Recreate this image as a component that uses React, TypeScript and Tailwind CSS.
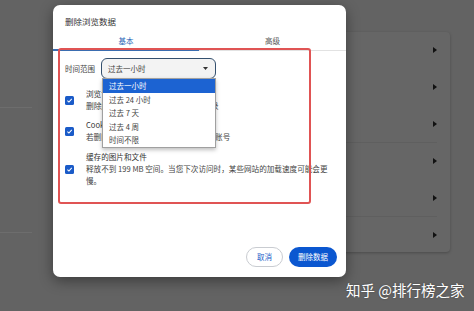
const font = { fontFamily: '"Noto Sans CJK SC", "Noto Sans", sans-serif' };

const options = ["过去一小时", "过去 24 小时", "过去 7 天", "过去 4 周", "时间不限"];

function Check() {
  return (
    <div className="w-[9px] h-[9px] rounded-[1.5px] bg-[#1a5bc8] flex items-center justify-center shrink-0">
      <svg width="7" height="7" viewBox="0 0 10 10">
        <path d="M2 5.2 L4.2 7.3 L8.2 2.8" fill="none" stroke="white" strokeWidth="1.5" />
      </svg>
    </div>
  );
}

function Arrow() {
  return (
    <svg width="4" height="6" viewBox="0 0 4 6">
      <path d="M0 0 L4 3 L0 6 Z" fill="#111" />
    </svg>
  );
}

function BackgroundPage() {
  return (
    <div className="w-[474px] h-[311px] bg-[#636363] flex overflow-hidden">
      <div className="w-[32px] shrink-0 flex flex-col">
        <div className="h-[108px] border-b border-[#6d6d6d]" />
        <div className="h-[125px] border-b border-[#6d6d6d]" />
      </div>
      <div className="flex-1 pt-[32px] pl-[40px] pr-[24px]">
        <div className="h-[220px] bg-[#666666] rounded-[4px] shadow-[0_1px_3px_rgba(0,0,0,0.25)] flex flex-col pr-[13px]">
          <div className="h-[111px] border-b border-[#5f5f5f] flex flex-col">
            {[0, 1, 2].map((i) => (
              <div key={i} className="h-[37px] flex items-center justify-end">
                <Arrow />
              </div>
            ))}
          </div>
          <div className="h-[74px] border-b border-[#5f5f5f] flex flex-col">
            {[0, 1].map((i) => (
              <div key={i} className="h-[37px] flex items-center justify-end">
                <Arrow />
              </div>
            ))}
          </div>
          <div className="h-[35px] flex items-center justify-end">
            <Arrow />
          </div>
        </div>
      </div>
    </div>
  );
}

export default function App() {
  return (
    <div className="relative w-[474px] h-[311px] overflow-hidden" style={font}>
      <BackgroundPage />

      {/* dialog */}
      <div className="absolute left-[53px] top-[5px] w-[293px] h-[272px] bg-white rounded-[7px] shadow-[0_4px_14px_rgba(0,0,0,0.4)] flex flex-col">
        <div className="pt-[10px] px-[12px] h-[22px] text-[8.5px] leading-[12px] text-[#333]">删除浏览数据</div>
        <div className="mt-[5px] flex text-[7.5px]">
          <div className="w-[146px] h-[19px] flex items-center justify-center text-[#2b66b8] border-b-2 border-[#3a6db0]">基本</div>
          <div className="flex-1 h-[19px] flex items-center justify-center text-[#555] border-b border-[#e2e2e2]">高级</div>
        </div>

        <div className="px-[12px] pt-[7px] text-[7.6px] text-[#444]">
          <div className="flex items-center gap-[6px] h-[21px]">
            <span className="w-[30px] text-[7.5px]">时间范围</span>
            <div className="relative w-[115px] h-[21px] rounded-[6px] border-[1.5px] border-[#34506e] bg-[#f3f3f3] flex items-center justify-between pl-[6px] pr-[7px] text-[7.5px]">
              <span>过去一小时</span>
              <svg width="5" height="3" viewBox="0 0 5 3">
                <path d="M0 0 L5 0 L2.5 3 Z" fill="#333" />
              </svg>
              {/* native dropdown list */}
              <div className="absolute left-0 top-[19px] w-[114px] bg-white border border-[#a0a0a0] shadow-[0_2px_4px_rgba(0,0,0,0.25)] z-10 flex flex-col">
                {options.map((o, i) => (
                  <div
                    key={o}
                    className={
                      i === 0
                        ? "h-[13.5px] flex items-center pl-[6px] bg-[#1c63d2] text-white"
                        : "h-[13.5px] flex items-center pl-[6px] text-[#444]"
                    }
                  >
                    {o}
                  </div>
                ))}
              </div>
            </div>
          </div>

          <div className="mt-[9px] flex items-center gap-[12px] h-[24px]">
            <Check />
            <div className="leading-[12px] whitespace-nowrap">
              <div className="text-[#333]">浏览记录</div>
              <div className="text-[7.8px]">删除所有已同步设备中的浏览历史记录</div>
            </div>
          </div>

          <div className="mt-[7px] flex items-center gap-[12px] h-[24px]">
            <Check />
            <div className="leading-[12px] whitespace-nowrap">
              <div className="text-[#333]">Cookie 及其他网站数据</div>
              <div>若删除此项，您将从大多数网站中退出账号</div>
            </div>
          </div>

          <div className="mt-[8px] flex items-center gap-[12px]">
            <Check />
            <div className="leading-[12px] whitespace-nowrap">
              <div className="text-[#333]">缓存的图片和文件</div>
              <div>释放不到 199 MB 空间。当您下次访问时，某些网站的加载速度可能会更</div>
              <div>慢。</div>
            </div>
          </div>
        </div>

        <div className="flex-1" />
        <div className="flex justify-end gap-[6px] pr-[9px] pb-[10px]">
          <button className="w-[37px] h-[20px] rounded-full border border-[#c9ccd1] text-[#1a5bc8] text-[7.5px]">取消</button>
          <button className="w-[48px] h-[20px] rounded-full bg-[#0b57d0] text-white text-[7.5px]">删除数据</button>
        </div>

        {/* red annotation box */}
        <div className="absolute left-[5px] top-[43px] w-[253px] h-[156px] border-2 border-[#e05454] rounded-[3px] pointer-events-none" />
      </div>

      {/* watermark */}
      <div className="absolute left-[346px] top-[281px] text-[14.5px] leading-[18px] text-white" style={{ ...font, textShadow: "0 0 2px rgba(0,0,0,0.3)" }}>
        知乎 @排行榜之家
      </div>
    </div>
  );
}
